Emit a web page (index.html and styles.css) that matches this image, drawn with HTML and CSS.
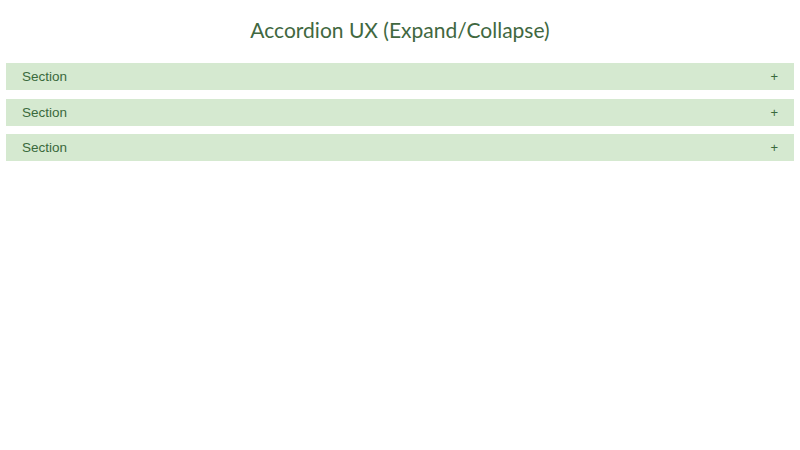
FILE: index.html
```html
<!DOCTYPE html>
<html>
<head>
<meta charset="utf-8">
<link rel="stylesheet" href="styles.css">
</head>
<body>
<h1 class="title">Accordion UX (Expand/Collapse)</h1>
<div class="accordion">
  <div class="item"><span class="label">Section</span><span class="icon">+</span></div>
  <div class="item"><span class="label">Section</span><span class="icon">+</span></div>
  <div class="item"><span class="label">Section</span><span class="icon">+</span></div>
</div>
</body>
</html>
```
FILE: styles.css
```css
html, body {
  margin: 0;
  padding: 0;
  background: #ffffff;
}
body {
  padding: 0 6px;
  font-family: "Liberation Sans", Arial, sans-serif;
}
.title {
  margin: 17px 0 20px;
  font-family: Lato, "Open Sans", sans-serif;
  font-weight: 400;
  font-size: 21px;
  line-height: 26px;
  text-align: center;
  color: #41683f;
}
.accordion {
  display: flex;
  flex-direction: column;
  gap: 8.5px;
}
.item {
  display: flex;
  justify-content: space-between;
  align-items: center;
  height: 27px;
  padding: 0 16px;
  background: #d5e9d0;
  color: #3a6a3c;
  font-size: 13.5px;
}
.icon {
  font-size: 13px;
  color: #3a6a3c;
}
```
